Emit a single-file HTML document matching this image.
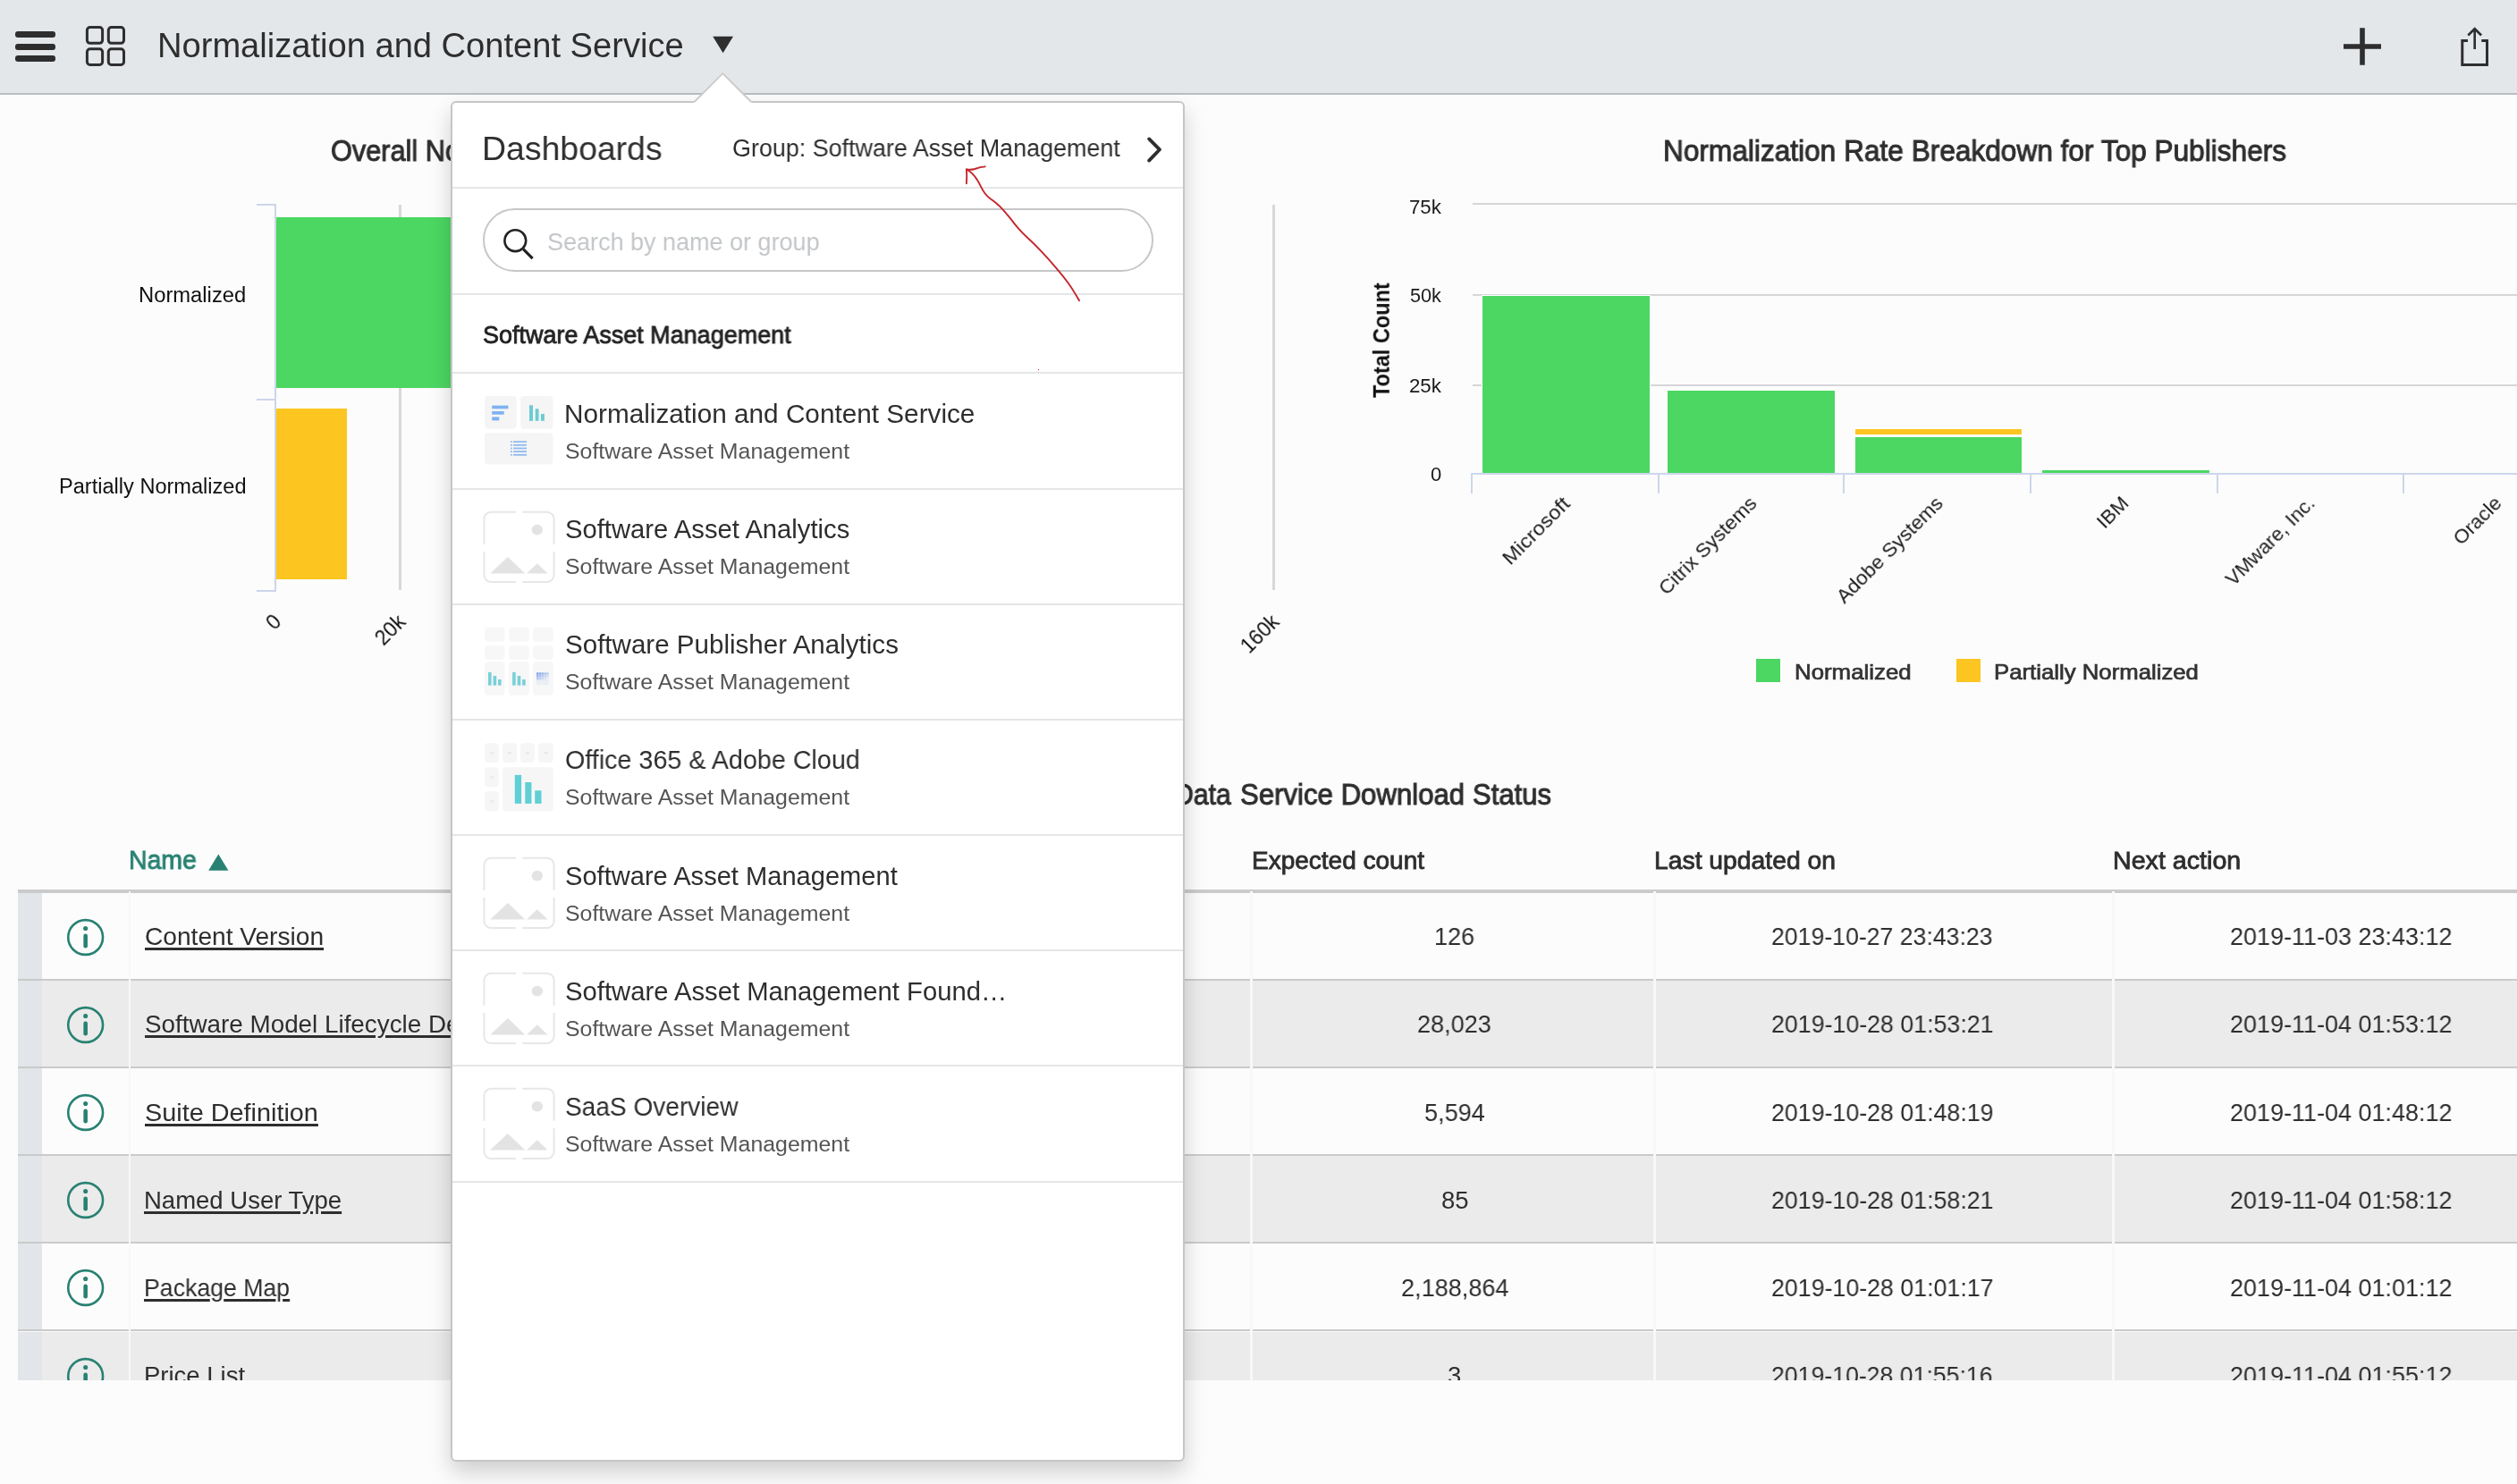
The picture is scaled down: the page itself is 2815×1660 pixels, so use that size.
<!DOCTYPE html>
<html lang="en"><head><meta charset="utf-8"><title>Normalization and Content Service</title>
<style>
html,body{margin:0;padding:0}
body{width:2815px;height:1660px;overflow:hidden;background:#fcfcfc;font-family:"Liberation Sans",sans-serif;position:relative}
.t{position:absolute;white-space:nowrap;display:block;will-change:transform}
.a{position:absolute;display:block}
#page{position:absolute;left:0;top:0;width:2815px;height:1544px;overflow:hidden}
</style></head><body>
<div id="page">
<i class="a" style="left:0.00px;top:0.00px;width:2815.00px;height:104.00px;background:#e4e7ea;"></i>
<i class="a" style="left:0.00px;top:104.00px;width:2815.00px;height:2.00px;background:#b9bdc1;"></i>
<i class="a" style="left:16.80px;top:35.00px;width:45.20px;height:7.00px;background:#2e2e2e;border-radius:3px;"></i>
<i class="a" style="left:16.80px;top:49.00px;width:45.20px;height:7.00px;background:#2e2e2e;border-radius:3px;"></i>
<i class="a" style="left:16.80px;top:62.00px;width:45.20px;height:7.00px;background:#2e2e2e;border-radius:3px;"></i>
<svg class="a" style="left:0px;top:0px" width="160" height="104" viewBox="0 0 160 104"><rect x="97.4" y="30.6" width="17.2" height="17.7" rx="3.2" fill="none" stroke="#2e2e2e" stroke-width="3"/><rect x="97.4" y="54.8" width="17.2" height="17.7" rx="3.2" fill="none" stroke="#2e2e2e" stroke-width="3"/><rect x="121.3" y="30.6" width="17.2" height="17.7" rx="3.2" fill="none" stroke="#2e2e2e" stroke-width="3"/><rect x="121.3" y="54.8" width="17.2" height="17.7" rx="3.2" fill="none" stroke="#2e2e2e" stroke-width="3"/></svg>
<svg class="a" style="left:790px;top:30px" width="40" height="40" viewBox="0 0 40 40"><path d="M7.2 10.8 L30 10.8 L18.6 29.2 Z" fill="#2e2e2e"/></svg>
<svg class="a" style="left:2600px;top:20px" width="200" height="70" viewBox="0 0 200 70"><path d="M21 32 H63 M42 11.3 V52.8" stroke="#2e2e2e" stroke-width="5.6" fill="none"/><path d="M160 25.5 H153.8 V52.4 H181.5 V25.5 H175.3" stroke="#2e2e2e" stroke-width="3" fill="none"/><path d="M167.7 35 V12.5 M160.3 19.5 L167.7 12.2 L175.1 19.5" stroke="#2e2e2e" stroke-width="2.6" fill="none"/></svg>
<i class="a" style="left:446.00px;top:229.00px;width:2.50px;height:431.00px;background:#d8d8d8;"></i>
<i class="a" style="left:1423.30px;top:229.00px;width:2.50px;height:431.00px;background:#d8d8d8;"></i>
<i class="a" style="left:306.50px;top:228.00px;width:2.50px;height:434.00px;background:#ccd6eb;"></i>
<i class="a" style="left:286.70px;top:227.60px;width:22.30px;height:2.00px;background:#ccd6eb;"></i>
<i class="a" style="left:286.70px;top:446.00px;width:22.30px;height:2.00px;background:#ccd6eb;"></i>
<i class="a" style="left:286.70px;top:660.00px;width:22.30px;height:2.00px;background:#ccd6eb;"></i>
<i class="a" style="left:309.00px;top:243.00px;width:991.00px;height:191.00px;background:#4bd762;"></i>
<i class="a" style="left:309.00px;top:457.00px;width:78.80px;height:191.00px;background:#fcc520;"></i>
<i class="a" style="left:1647.00px;top:227.40px;width:1168.00px;height:2.00px;background:#d6d6d9;"></i>
<i class="a" style="left:1647.00px;top:328.70px;width:1168.00px;height:2.00px;background:#d6d6d9;"></i>
<i class="a" style="left:1647.00px;top:430.20px;width:1168.00px;height:2.00px;background:#d6d6d9;"></i>
<i class="a" style="left:1657.00px;top:329.80px;width:188.70px;height:200.40px;background:#fff;"></i>
<i class="a" style="left:1658.00px;top:330.80px;width:186.70px;height:198.40px;background:#4bd762;"></i>
<i class="a" style="left:1864.20px;top:435.60px;width:188.80px;height:94.60px;background:#fff;"></i>
<i class="a" style="left:1865.20px;top:436.60px;width:186.80px;height:92.60px;background:#4bd762;"></i>
<i class="a" style="left:2073.80px;top:487.90px;width:188.70px;height:42.30px;background:#fff;"></i>
<i class="a" style="left:2074.80px;top:488.90px;width:186.70px;height:40.30px;background:#4bd762;"></i>
<i class="a" style="left:2073.80px;top:478.60px;width:188.70px;height:8.80px;background:#fff;"></i>
<i class="a" style="left:2074.80px;top:479.60px;width:186.70px;height:6.80px;background:#fcc522;"></i>
<i class="a" style="left:2283.00px;top:525.20px;width:188.70px;height:5.00px;background:#fff;"></i>
<i class="a" style="left:2284.00px;top:526.20px;width:186.70px;height:3.00px;background:#4bd762;"></i>
<i class="a" style="left:1645.00px;top:529.00px;width:1170.00px;height:2.00px;background:#ccd6eb;"></i>
<i class="a" style="left:1645.00px;top:529.00px;width:2.00px;height:22.50px;background:#ccd6eb;"></i>
<i class="a" style="left:1854.20px;top:529.00px;width:2.00px;height:22.50px;background:#ccd6eb;"></i>
<i class="a" style="left:2061.00px;top:529.00px;width:2.00px;height:22.50px;background:#ccd6eb;"></i>
<i class="a" style="left:2270.00px;top:529.00px;width:2.00px;height:22.50px;background:#ccd6eb;"></i>
<i class="a" style="left:2479.00px;top:529.00px;width:2.00px;height:22.50px;background:#ccd6eb;"></i>
<i class="a" style="left:2687.20px;top:529.00px;width:2.00px;height:22.50px;background:#ccd6eb;"></i>
<i class="a" style="left:1964.00px;top:736.80px;width:27.00px;height:26.40px;background:#4bd762;"></i>
<i class="a" style="left:2187.50px;top:736.80px;width:27.00px;height:26.40px;background:#fcc522;"></i>
<svg class="a" style="left:228px;top:950px" width="32" height="28" viewBox="0 0 32 28"><path d="M5.2 23.8 L27.4 23.8 L16.3 5.6 Z" fill="#288172"/></svg>
<i class="a" style="left:20.00px;top:995.00px;width:2795.00px;height:4.00px;background:#cbcbcb;"></i>
<i class="a" style="left:20.00px;top:999.00px;width:26.70px;height:96.00px;background:#e2e5e9;"></i>
<i class="a" style="left:20.00px;top:1095.00px;width:2795.00px;height:2.00px;background:#cacaca;"></i>
<i class="a" style="left:143.90px;top:997.00px;width:2.40px;height:100.00px;background:#f8f8f8;"></i>
<i class="a" style="left:1398.40px;top:997.00px;width:2.40px;height:100.00px;background:#f8f8f8;"></i>
<i class="a" style="left:1849.20px;top:997.00px;width:2.40px;height:100.00px;background:#f8f8f8;"></i>
<i class="a" style="left:2362.30px;top:997.00px;width:2.40px;height:100.00px;background:#f8f8f8;"></i>
<svg class="a" style="left:70px;top:1023px" width="52" height="52" viewBox="0 0 52 52"><circle cx="25.65" cy="25.5" r="19.4" fill="none" stroke="#288172" stroke-width="2.6"/><circle cx="25.65" cy="15.5" r="2.55" fill="#288172"/><path d="M25.65 23.8 V35.3" stroke="#288172" stroke-width="4.6" stroke-linecap="round"/></svg>
<i class="a" style="left:20.00px;top:1097.00px;width:2795.00px;height:96.00px;background:#ebebeb;"></i>
<i class="a" style="left:20.00px;top:1097.00px;width:26.70px;height:96.00px;background:#e2e5e9;"></i>
<i class="a" style="left:20.00px;top:1193.00px;width:2795.00px;height:2.00px;background:#cacaca;"></i>
<i class="a" style="left:143.90px;top:1097.00px;width:2.40px;height:98.00px;background:#f8f8f8;"></i>
<i class="a" style="left:1398.40px;top:1097.00px;width:2.40px;height:98.00px;background:#f8f8f8;"></i>
<i class="a" style="left:1849.20px;top:1097.00px;width:2.40px;height:98.00px;background:#f8f8f8;"></i>
<i class="a" style="left:2362.30px;top:1097.00px;width:2.40px;height:98.00px;background:#f8f8f8;"></i>
<svg class="a" style="left:70px;top:1121px" width="52" height="52" viewBox="0 0 52 52"><circle cx="25.65" cy="25.5" r="19.4" fill="none" stroke="#288172" stroke-width="2.6"/><circle cx="25.65" cy="15.5" r="2.55" fill="#288172"/><path d="M25.65 23.8 V35.3" stroke="#288172" stroke-width="4.6" stroke-linecap="round"/></svg>
<i class="a" style="left:20.00px;top:1195.00px;width:26.70px;height:96.00px;background:#e2e5e9;"></i>
<i class="a" style="left:20.00px;top:1291.00px;width:2795.00px;height:2.00px;background:#cacaca;"></i>
<i class="a" style="left:143.90px;top:1195.00px;width:2.40px;height:98.00px;background:#f8f8f8;"></i>
<i class="a" style="left:1398.40px;top:1195.00px;width:2.40px;height:98.00px;background:#f8f8f8;"></i>
<i class="a" style="left:1849.20px;top:1195.00px;width:2.40px;height:98.00px;background:#f8f8f8;"></i>
<i class="a" style="left:2362.30px;top:1195.00px;width:2.40px;height:98.00px;background:#f8f8f8;"></i>
<svg class="a" style="left:70px;top:1219px" width="52" height="52" viewBox="0 0 52 52"><circle cx="25.65" cy="25.5" r="19.4" fill="none" stroke="#288172" stroke-width="2.6"/><circle cx="25.65" cy="15.5" r="2.55" fill="#288172"/><path d="M25.65 23.8 V35.3" stroke="#288172" stroke-width="4.6" stroke-linecap="round"/></svg>
<i class="a" style="left:20.00px;top:1293.00px;width:2795.00px;height:96.00px;background:#ebebeb;"></i>
<i class="a" style="left:20.00px;top:1293.00px;width:26.70px;height:96.00px;background:#e2e5e9;"></i>
<i class="a" style="left:20.00px;top:1389.00px;width:2795.00px;height:2.00px;background:#cacaca;"></i>
<i class="a" style="left:143.90px;top:1293.00px;width:2.40px;height:98.00px;background:#f8f8f8;"></i>
<i class="a" style="left:1398.40px;top:1293.00px;width:2.40px;height:98.00px;background:#f8f8f8;"></i>
<i class="a" style="left:1849.20px;top:1293.00px;width:2.40px;height:98.00px;background:#f8f8f8;"></i>
<i class="a" style="left:2362.30px;top:1293.00px;width:2.40px;height:98.00px;background:#f8f8f8;"></i>
<svg class="a" style="left:70px;top:1317px" width="52" height="52" viewBox="0 0 52 52"><circle cx="25.65" cy="25.5" r="19.4" fill="none" stroke="#288172" stroke-width="2.6"/><circle cx="25.65" cy="15.5" r="2.55" fill="#288172"/><path d="M25.65 23.8 V35.3" stroke="#288172" stroke-width="4.6" stroke-linecap="round"/></svg>
<i class="a" style="left:20.00px;top:1391.00px;width:26.70px;height:96.00px;background:#e2e5e9;"></i>
<i class="a" style="left:20.00px;top:1487.00px;width:2795.00px;height:2.00px;background:#cacaca;"></i>
<i class="a" style="left:143.90px;top:1391.00px;width:2.40px;height:98.00px;background:#f8f8f8;"></i>
<i class="a" style="left:1398.40px;top:1391.00px;width:2.40px;height:98.00px;background:#f8f8f8;"></i>
<i class="a" style="left:1849.20px;top:1391.00px;width:2.40px;height:98.00px;background:#f8f8f8;"></i>
<i class="a" style="left:2362.30px;top:1391.00px;width:2.40px;height:98.00px;background:#f8f8f8;"></i>
<svg class="a" style="left:70px;top:1415px" width="52" height="52" viewBox="0 0 52 52"><circle cx="25.65" cy="25.5" r="19.4" fill="none" stroke="#288172" stroke-width="2.6"/><circle cx="25.65" cy="15.5" r="2.55" fill="#288172"/><path d="M25.65 23.8 V35.3" stroke="#288172" stroke-width="4.6" stroke-linecap="round"/></svg>
<i class="a" style="left:20.00px;top:1490.00px;width:2795.00px;height:96.00px;background:#ebebeb;"></i>
<i class="a" style="left:20.00px;top:1490.00px;width:26.70px;height:96.00px;background:#e2e5e9;"></i>
<i class="a" style="left:20.00px;top:1586.00px;width:2795.00px;height:2.00px;background:#cacaca;"></i>
<i class="a" style="left:143.90px;top:1490.00px;width:2.40px;height:98.00px;background:#f8f8f8;"></i>
<i class="a" style="left:1398.40px;top:1490.00px;width:2.40px;height:98.00px;background:#f8f8f8;"></i>
<i class="a" style="left:1849.20px;top:1490.00px;width:2.40px;height:98.00px;background:#f8f8f8;"></i>
<i class="a" style="left:2362.30px;top:1490.00px;width:2.40px;height:98.00px;background:#f8f8f8;"></i>
<svg class="a" style="left:70px;top:1514px" width="52" height="52" viewBox="0 0 52 52"><circle cx="25.65" cy="25.5" r="19.4" fill="none" stroke="#288172" stroke-width="2.6"/><circle cx="25.65" cy="15.5" r="2.55" fill="#288172"/><path d="M25.65 23.8 V35.3" stroke="#288172" stroke-width="4.6" stroke-linecap="round"/></svg>
<span class="t" style="font-size:38px;line-height:38px;color:#2e2e2e;top:32px;left:175.59px;transform-origin:0 32px;transform:scaleX(1.0025);">Normalization and Content Service</span>
<span class="t" style="font-size:32.5px;line-height:32.5px;color:#2e2e2e;-webkit-text-stroke:0.97px;top:153px;left:369.86px;transform-origin:0 27px;transform:scaleX(0.9441);">Overall Normalization Rate</span>
<span class="t" style="font-size:23.5px;line-height:23.5px;color:#111;top:319px;left:155.19px;transform-origin:0 19px;transform:scaleX(1.0114);">Normalized</span>
<span class="t" style="font-size:23.5px;line-height:23.5px;color:#111;top:533px;left:65.80px;transform-origin:0 19px;transform:scaleX(1.0030);">Partially Normalized</span>
<span class="t" style="font-size:23.5px;line-height:23.5px;color:#111;top:677.80px;left:302.69px;transform-origin:13.01px 19px;transform:rotate(-45deg) scaleX(0.9700);">0</span>
<span class="t" style="font-size:23.5px;line-height:23.5px;color:#111;top:677.80px;left:416.56px;transform-origin:38.14px 19px;transform:rotate(-45deg) scaleX(0.9700);">20k</span>
<span class="t" style="font-size:23.5px;line-height:23.5px;color:#111;top:677.80px;left:1380.98px;transform-origin:51.22px 19px;transform:rotate(-45deg) scaleX(0.9700);">160k</span>
<span class="t" style="font-size:32.5px;line-height:32.5px;color:#2e2e2e;-webkit-text-stroke:0.97px;top:153px;left:1859.85px;transform-origin:0 27px;transform:scaleX(0.9728);">Normalization Rate Breakdown for Top Publishers</span>
<span class="t" style="font-size:21.5px;line-height:21.5px;color:#1a1a1a;top:222px;left:1576.37px;transform-origin:0 17px;transform:scaleX(1.0347);">75k</span>
<span class="t" style="font-size:21.5px;line-height:21.5px;color:#1a1a1a;top:321px;left:1577.40px;transform-origin:0 17px;transform:scaleX(1.0051);">50k</span>
<span class="t" style="font-size:21.5px;line-height:21.5px;color:#1a1a1a;top:422px;left:1576.37px;transform-origin:0 17px;transform:scaleX(1.0347);">25k</span>
<span class="t" style="font-size:21.5px;line-height:21.5px;color:#1a1a1a;top:521px;left:1600.25px;transform-origin:0 17px;transform:scaleX(1.0200);">0</span>
<span class="t" style="font-size:26.2px;line-height:26.2px;color:#111;font-weight:700;top:293.60px;left:1410.01px;transform-origin:143.79px 22px;transform:rotate(-90deg) scaleX(0.8971);">Total Count</span>
<span class="t" style="font-size:21.5px;line-height:21.5px;color:#1a1a1a;top:548.00px;left:1669.75px;transform-origin:87.25px 17px;transform:rotate(-45deg) scaleX(1.1038);">Microsoft</span>
<span class="t" style="font-size:21.5px;line-height:21.5px;color:#1a1a1a;top:548.00px;left:1828.58px;transform-origin:136.62px 17px;transform:rotate(-45deg) scaleX(1.0529);">Citrix Systems</span>
<span class="t" style="font-size:21.5px;line-height:21.5px;color:#1a1a1a;top:548.00px;left:2023.57px;transform-origin:149.83px 17px;transform:rotate(-45deg) scaleX(1.0479);">Adobe Systems</span>
<span class="t" style="font-size:21.5px;line-height:21.5px;color:#1a1a1a;top:548.00px;left:2344.28px;transform-origin:37.32px 17px;transform:rotate(-45deg) scaleX(1.0400);">IBM</span>
<span class="t" style="font-size:21.5px;line-height:21.5px;color:#1a1a1a;top:548.00px;left:2465.32px;transform-origin:124.48px 17px;transform:rotate(-45deg) scaleX(1.0400);">VMware, Inc.</span>
<span class="t" style="font-size:21.5px;line-height:21.5px;color:#1a1a1a;top:548.00px;left:2735.63px;transform-origin:62.37px 17px;transform:rotate(-45deg) scaleX(1.0400);">Oracle</span>
<span class="t" style="font-size:24px;line-height:24px;color:#333;-webkit-text-stroke:0.72px;top:740px;left:2007.42px;transform-origin:0 20px;transform:scaleX(1.0762);">Normalized</span>
<span class="t" style="font-size:24px;line-height:24px;color:#333;-webkit-text-stroke:0.72px;top:740px;left:2230.33px;transform-origin:0 20px;transform:scaleX(1.0727);">Partially Normalized</span>
<span class="t" style="font-size:32.5px;line-height:32.5px;color:#2e2e2e;-webkit-text-stroke:0.97px;top:873px;left:1386.84px;transform-origin:0 27px;transform:scaleX(0.9587);">Service Download Status</span>
<span class="t" style="font-size:32.5px;line-height:32.5px;color:#2e2e2e;-webkit-text-stroke:0.97px;top:873px;left:1312.59px;transform-origin:0 27px;transform:scaleX(0.9300);">Data</span>
<span class="t" style="font-size:29px;line-height:29px;color:#288172;-webkit-text-stroke:0.87px;top:948px;left:144.44px;transform-origin:0 24px;transform:scaleX(0.9807);">Name</span>
<span class="t" style="font-size:28px;line-height:28px;color:#2e2e2e;-webkit-text-stroke:0.84px;top:949px;left:1400.20px;transform-origin:0 23px;transform:scaleX(0.9982);">Expected count</span>
<span class="t" style="font-size:28px;line-height:28px;color:#2e2e2e;-webkit-text-stroke:0.84px;top:949px;left:1850.48px;transform-origin:0 23px;transform:scaleX(1.0108);">Last updated on</span>
<span class="t" style="font-size:28px;line-height:28px;color:#2e2e2e;-webkit-text-stroke:0.84px;top:949px;left:2363.05px;transform-origin:0 23px;transform:scaleX(1.0227);">Next action</span>
<span class="t" style="font-size:27.5px;line-height:27.5px;color:#2e2e2e;top:1034px;left:161.68px;transform-origin:0 23px;transform:scaleX(1.0223);text-decoration:underline;text-decoration-thickness:2.6px;text-underline-offset:2.9px;">Content Version</span>
<span class="t" style="font-size:27.5px;line-height:27.5px;color:#2e2e2e;top:1034px;left:1603.76px;transform-origin:0 23px;transform:scaleX(0.9850);">126</span>
<span class="t" style="font-size:27.5px;line-height:27.5px;color:#2e2e2e;top:1034px;left:1980.83px;transform-origin:0 23px;transform:scaleX(0.9694);">2019-10-27 23:43:23</span>
<span class="t" style="font-size:27.5px;line-height:27.5px;color:#2e2e2e;top:1034px;left:2493.92px;transform-origin:0 23px;transform:scaleX(0.9811);">2019-11-03 23:43:12</span>
<span class="t" style="font-size:27.5px;line-height:27.5px;color:#2e2e2e;top:1132px;left:161.69px;transform-origin:0 23px;transform:scaleX(1.0115);text-decoration:underline;text-decoration-thickness:2.6px;text-underline-offset:2.9px;">Software Model Lifecycle Definition</span>
<span class="t" style="font-size:27.5px;line-height:27.5px;color:#2e2e2e;top:1132px;left:1585.42px;transform-origin:0 23px;transform:scaleX(0.9850);">28,023</span>
<span class="t" style="font-size:27.5px;line-height:27.5px;color:#2e2e2e;top:1132px;left:1980.83px;transform-origin:0 23px;transform:scaleX(0.9733);">2019-10-28 01:53:21</span>
<span class="t" style="font-size:27.5px;line-height:27.5px;color:#2e2e2e;top:1132px;left:2493.92px;transform-origin:0 23px;transform:scaleX(0.9811);">2019-11-04 01:53:12</span>
<span class="t" style="font-size:27.5px;line-height:27.5px;color:#2e2e2e;top:1231px;left:161.65px;transform-origin:0 23px;transform:scaleX(1.0483);text-decoration:underline;text-decoration-thickness:2.6px;text-underline-offset:2.9px;">Suite Definition</span>
<span class="t" style="font-size:27.5px;line-height:27.5px;color:#2e2e2e;top:1231px;left:1592.95px;transform-origin:0 23px;transform:scaleX(0.9850);">5,594</span>
<span class="t" style="font-size:27.5px;line-height:27.5px;color:#2e2e2e;top:1231px;left:1980.83px;transform-origin:0 23px;transform:scaleX(0.9733);">2019-10-28 01:48:19</span>
<span class="t" style="font-size:27.5px;line-height:27.5px;color:#2e2e2e;top:1231px;left:2493.92px;transform-origin:0 23px;transform:scaleX(0.9811);">2019-11-04 01:48:12</span>
<span class="t" style="font-size:27.5px;line-height:27.5px;color:#2e2e2e;top:1329px;left:160.70px;transform-origin:0 23px;transform:scaleX(0.9989);text-decoration:underline;text-decoration-thickness:2.6px;text-underline-offset:2.9px;">Named User Type</span>
<span class="t" style="font-size:27.5px;line-height:27.5px;color:#2e2e2e;top:1329px;left:1611.78px;transform-origin:0 23px;transform:scaleX(0.9850);">85</span>
<span class="t" style="font-size:27.5px;line-height:27.5px;color:#2e2e2e;top:1329px;left:1980.83px;transform-origin:0 23px;transform:scaleX(0.9733);">2019-10-28 01:58:21</span>
<span class="t" style="font-size:27.5px;line-height:27.5px;color:#2e2e2e;top:1329px;left:2493.92px;transform-origin:0 23px;transform:scaleX(0.9811);">2019-11-04 01:58:12</span>
<span class="t" style="font-size:27.5px;line-height:27.5px;color:#2e2e2e;top:1427px;left:160.76px;transform-origin:0 23px;transform:scaleX(0.9695);text-decoration:underline;text-decoration-thickness:2.6px;text-underline-offset:2.9px;">Package Map</span>
<span class="t" style="font-size:27.5px;line-height:27.5px;color:#2e2e2e;top:1427px;left:1566.60px;transform-origin:0 23px;transform:scaleX(0.9850);">2,188,864</span>
<span class="t" style="font-size:27.5px;line-height:27.5px;color:#2e2e2e;top:1427px;left:1980.83px;transform-origin:0 23px;transform:scaleX(0.9733);">2019-10-28 01:01:17</span>
<span class="t" style="font-size:27.5px;line-height:27.5px;color:#2e2e2e;top:1427px;left:2493.92px;transform-origin:0 23px;transform:scaleX(0.9811);">2019-11-04 01:01:12</span>
<span class="t" style="font-size:27.5px;line-height:27.5px;color:#2e2e2e;top:1525px;left:160.71px;transform-origin:0 23px;transform:scaleX(0.9959);text-decoration:underline;text-decoration-thickness:2.6px;text-underline-offset:2.9px;">Price List</span>
<span class="t" style="font-size:27.5px;line-height:27.5px;color:#2e2e2e;top:1525px;left:1619.32px;transform-origin:0 23px;transform:scaleX(0.9850);">3</span>
<span class="t" style="font-size:27.5px;line-height:27.5px;color:#2e2e2e;top:1525px;left:1980.83px;transform-origin:0 23px;transform:scaleX(0.9694);">2019-10-28 01:55:16</span>
<span class="t" style="font-size:27.5px;line-height:27.5px;color:#2e2e2e;top:1525px;left:2493.92px;transform-origin:0 23px;transform:scaleX(0.9811);">2019-11-04 01:55:12</span>
</div>
<div class="a" style="left:504px;top:112.6px;width:817px;height:1518.4px;background:#fff;border:2px solid #c6c6c6;border-radius:6px;box-shadow:0 12px 25px rgba(0,0,0,0.18)"></div>
<svg class="a" style="left:770px;top:78px" width="80" height="40" viewBox="0 0 80 40"><path d="M6.5 36.3 L38.3 4.2 L70.2 36.3 L70.2 39 L6.5 39 Z" fill="#fff"/><path d="M6.5 36.0 L38.3 4.2 L70.2 36.0" fill="none" stroke="#c9c9c9" stroke-width="1.8"/></svg>
<svg class="a" style="left:1270px;top:145px" width="40" height="45" viewBox="0 0 40 45"><path d="M15.1 10.4 L27.0 22.3 L15.1 34.6" fill="none" stroke="#2e2e2e" stroke-width="3.8" stroke-linecap="round" stroke-linejoin="round"/></svg>
<i class="a" style="left:506.00px;top:209.00px;width:817.00px;height:2.00px;background:#e4e6e8;"></i>
<i class="a" style="left:540px;top:232.7px;width:745.5px;height:67.7px;border:2px solid #c6c7c9;border-radius:36px;background:#fff"></i>
<svg class="a" style="left:555px;top:250px" width="50" height="50" viewBox="0 0 50 50"><circle cx="21.3" cy="19.2" r="11.9" fill="none" stroke="#222" stroke-width="2.6"/><path d="M30.2 28.7 L40.6 39.2" stroke="#222" stroke-width="3.2" fill="none"/></svg>
<i class="a" style="left:506.00px;top:328.00px;width:817.00px;height:2.00px;background:#e4e6e8;"></i>
<svg class="a" style="left:1060px;top:170px" width="170" height="180" viewBox="0 0 170 180"><path d="M147.0 166.2 Q139.5 153.1 134.1 145.7 Q128.6 138.3 121.3 129.8 Q114.0 121.3 105.5 112.2 Q97.0 103.1 90.3 97.0 Q83.7 91.0 79.5 86.2 Q75.2 81.3 71.6 76.4 Q67.9 71.6 63.1 66.1 Q58.2 60.6 54.5 57.6 Q50.9 54.6 47.6 52.3 Q44.3 50.0 41.5 46.2 Q38.8 42.5 36.7 38.2 Q34.6 34.0 32.5 30.6 Q30.3 27.3 27.3 24.2 Q24.3 21.2 22.6 20.3 L20.9 19.4" fill="none" stroke="#c4262c" stroke-width="1.9" stroke-linecap="round" stroke-linejoin="round"/><path d="M41.8 16.4 Q36.4 16.6 30.3 19.0 Q25 20.4 20.9 19.4 Q21.6 26 20.9 35.2" fill="none" stroke="#c4262c" stroke-width="1.9" stroke-linecap="round" stroke-linejoin="round"/></svg>
<i class="a" style="left:1160.50px;top:412.50px;width:1.50px;height:1.50px;background:#c4262c;"></i>
<i class="a" style="left:506.00px;top:416.45px;width:817.00px;height:2.00px;background:#e4e6e8;"></i>
<svg class="a" style="left:540px;top:417.0px" width="82" height="129" viewBox="0 0 82 129"><rect x="2.1" y="26.1" width="35.6" height="36.6" rx="4" fill="#f5f5f5"/><rect x="42.2" y="26.1" width="36.3" height="36.6" rx="4" fill="#f5f5f5"/><rect x="2.1" y="67.3" width="76.4" height="35.3" rx="4" fill="#f5f5f5"/><rect x="10.2" y="36.6" width="18.2" height="3.7" fill="#7fb2f0"/><rect x="10.2" y="43.0" width="13.5" height="3.7" fill="#7fb2f0"/><rect x="10.2" y="49.4" width="8.1" height="4.0" fill="#7fb2f0"/><rect x="52.0" y="36.3" width="4.0" height="17.5" fill="#6bccd2"/><rect x="58.7" y="40.3" width="3.8" height="13.5" fill="#6bccd2"/><rect x="65.0" y="46.0" width="3.9" height="7.8" fill="#6bccd2"/><rect x="34.1" y="76.30" width="14.9" height="1.8" fill="#8fbaee"/><rect x="31" y="76.30" width="1.8" height="1.8" fill="#8fbaee"/><rect x="34.1" y="79.95" width="14.9" height="1.8" fill="#8fbaee"/><rect x="31" y="79.95" width="1.8" height="1.8" fill="#8fbaee"/><rect x="34.1" y="83.60" width="14.9" height="1.8" fill="#8fbaee"/><rect x="31" y="83.60" width="1.8" height="1.8" fill="#8fbaee"/><rect x="34.1" y="87.25" width="14.9" height="1.8" fill="#8fbaee"/><rect x="31" y="87.25" width="1.8" height="1.8" fill="#8fbaee"/><rect x="34.1" y="90.90" width="14.9" height="1.8" fill="#8fbaee"/><rect x="31" y="90.90" width="1.8" height="1.8" fill="#8fbaee"/></svg>
<i class="a" style="left:506.00px;top:545.60px;width:817.00px;height:2.00px;background:#e4e6e8;"></i>
<svg class="a" style="left:540px;top:546.5px" width="82" height="129" viewBox="0 0 82 129"><path d="M36.8 25.7 H9.4 a8 8 0 0 0 -8 8 V61.8 M1.4 70 V96.1 a8 8 0 0 0 8 8 H36.8 M44.3 104.1 H71.6 a8 8 0 0 0 8 -8 V70 M79.6 61.8 V33.7 a8 8 0 0 0 -8 -8 H44.3" fill="none" stroke="#e7e7e7" stroke-width="2"/><ellipse cx="60.8" cy="45.6" rx="6.2" ry="5.8" fill="#e3e3e3"/><path d="M8.2 94.5 L27.9 75.9 L47.3 94.5 Z M49 94.5 L60.8 83.2 L72.6 94.5 Z" fill="#e3e3e3"/></svg>
<i class="a" style="left:506.00px;top:674.75px;width:817.00px;height:2.00px;background:#e4e6e8;"></i>
<svg class="a" style="left:540px;top:676.0px" width="82" height="129" viewBox="0 0 82 129"><rect x="2.1" y="25.8" width="22.4" height="16" rx="4" fill="#f7f7f7"/><rect x="2.1" y="46" width="22.4" height="15.7" rx="4" fill="#f7f7f7"/><rect x="2.1" y="64.2" width="22.4" height="37.8" rx="4" fill="#f7f7f7"/><rect x="29.1" y="25.8" width="22.7" height="16" rx="4" fill="#f7f7f7"/><rect x="29.1" y="46" width="22.7" height="15.7" rx="4" fill="#f7f7f7"/><rect x="29.1" y="64.2" width="22.7" height="37.8" rx="4" fill="#f7f7f7"/><rect x="56.2" y="25.8" width="22.6" height="16" rx="4" fill="#f7f7f7"/><rect x="56.2" y="46" width="22.6" height="15.7" rx="4" fill="#f7f7f7"/><rect x="56.2" y="64.2" width="22.6" height="37.8" rx="4" fill="#f7f7f7"/><rect x="6.0" y="76.0" width="3.6" height="14.7" fill="#79d0d8"/><rect x="11.6" y="80.0" width="3.6" height="10.7" fill="#79d0d8"/><rect x="17.0" y="84.0" width="3.6" height="6.7" fill="#79d0d8"/><rect x="33.1" y="76.0" width="3.6" height="14.7" fill="#79d0d8"/><rect x="38.7" y="80.0" width="3.6" height="10.7" fill="#79d0d8"/><rect x="44.1" y="84.0" width="3.6" height="6.7" fill="#79d0d8"/><rect x="60.0" y="76.3" width="2.5" height="2.5" fill="#7fa4e8" fill-opacity="1.00"/><rect x="62.8" y="76.3" width="2.5" height="2.5" fill="#7fa4e8" fill-opacity="0.88"/><rect x="65.6" y="76.3" width="2.5" height="2.5" fill="#7fa4e8" fill-opacity="0.76"/><rect x="68.4" y="76.3" width="2.5" height="2.5" fill="#7fa4e8" fill-opacity="0.64"/><rect x="71.2" y="76.3" width="2.5" height="2.5" fill="#7fa4e8" fill-opacity="0.52"/><rect x="60.0" y="79.1" width="2.5" height="2.5" fill="#7fa4e8" fill-opacity="0.80"/><rect x="62.8" y="79.1" width="2.5" height="2.5" fill="#7fa4e8" fill-opacity="0.68"/><rect x="65.6" y="79.1" width="2.5" height="2.5" fill="#7fa4e8" fill-opacity="0.56"/><rect x="68.4" y="79.1" width="2.5" height="2.5" fill="#7fa4e8" fill-opacity="0.44"/><rect x="71.2" y="79.1" width="2.5" height="2.5" fill="#7fa4e8" fill-opacity="0.32"/><rect x="60.0" y="81.9" width="2.5" height="2.5" fill="#7fa4e8" fill-opacity="0.60"/><rect x="62.8" y="81.9" width="2.5" height="2.5" fill="#7fa4e8" fill-opacity="0.48"/><rect x="65.6" y="81.9" width="2.5" height="2.5" fill="#7fa4e8" fill-opacity="0.36"/><rect x="68.4" y="81.9" width="2.5" height="2.5" fill="#7fa4e8" fill-opacity="0.24"/><rect x="71.2" y="81.9" width="2.5" height="2.5" fill="#7fa4e8" fill-opacity="0.12"/><rect x="60.0" y="84.7" width="2.5" height="2.5" fill="#7fa4e8" fill-opacity="0.15"/><rect x="62.8" y="84.7" width="2.5" height="2.5" fill="#7fa4e8" fill-opacity="0.12"/><rect x="65.6" y="84.7" width="2.5" height="2.5" fill="#7fa4e8" fill-opacity="0.12"/><rect x="68.4" y="84.7" width="2.5" height="2.5" fill="#7fa4e8" fill-opacity="0.12"/><rect x="71.2" y="84.7" width="2.5" height="2.5" fill="#7fa4e8" fill-opacity="0.12"/><rect x="60.0" y="87.5" width="2.5" height="2.5" fill="#7fa4e8" fill-opacity="0.12"/><rect x="62.8" y="87.5" width="2.5" height="2.5" fill="#7fa4e8" fill-opacity="0.12"/><rect x="65.6" y="87.5" width="2.5" height="2.5" fill="#7fa4e8" fill-opacity="0.12"/><rect x="68.4" y="87.5" width="2.5" height="2.5" fill="#7fa4e8" fill-opacity="0.12"/><rect x="71.2" y="87.5" width="2.5" height="2.5" fill="#7fa4e8" fill-opacity="0.12"/></svg>
<i class="a" style="left:506.00px;top:803.90px;width:817.00px;height:2.00px;background:#e4e6e8;"></i>
<svg class="a" style="left:540px;top:805.0px" width="82" height="129" viewBox="0 0 82 129"><rect x="2.1" y="26.2" width="15.7" height="21.9" rx="4" fill="#f6f6f6"/><rect x="8.2" y="36.3" width="3.6" height="2" fill="#dfe9ee"/><rect x="22.0" y="26.2" width="16.0" height="21.9" rx="4" fill="#f6f6f6"/><rect x="28.2" y="36.3" width="3.6" height="2" fill="#dfe9ee"/><rect x="41.9" y="26.2" width="16.0" height="21.9" rx="4" fill="#f6f6f6"/><rect x="48.1" y="36.3" width="3.6" height="2" fill="#dfe9ee"/><rect x="62.0" y="26.2" width="16.8" height="21.9" rx="4" fill="#f6f6f6"/><rect x="68.6" y="36.3" width="3.6" height="2" fill="#dfe9ee"/><rect x="2.1" y="53.2" width="15.7" height="22.4" rx="4" fill="#f6f6f6"/><rect x="8.1" y="63.4" width="3.6" height="2" fill="#dfe9ee"/><rect x="2.1" y="80.1" width="15.7" height="22.4" rx="4" fill="#f6f6f6"/><rect x="8.1" y="90.3" width="3.6" height="2" fill="#dfe9ee"/><rect x="22" y="53.2" width="56.8" height="49.5" rx="4" fill="#f6f6f6"/><rect x="35.8" y="61.9" width="7.3" height="32.0" fill="#60cfd6"/><rect x="47.3" y="70.0" width="7.1" height="23.9" fill="#60cfd6"/><rect x="58.2" y="79.3" width="7.3" height="14.6" fill="#60cfd6"/></svg>
<i class="a" style="left:506.00px;top:933.05px;width:817.00px;height:2.00px;background:#e4e6e8;"></i>
<svg class="a" style="left:540px;top:933.95px" width="82" height="129" viewBox="0 0 82 129"><path d="M36.8 25.7 H9.4 a8 8 0 0 0 -8 8 V61.8 M1.4 70 V96.1 a8 8 0 0 0 8 8 H36.8 M44.3 104.1 H71.6 a8 8 0 0 0 8 -8 V70 M79.6 61.8 V33.7 a8 8 0 0 0 -8 -8 H44.3" fill="none" stroke="#e7e7e7" stroke-width="2"/><ellipse cx="60.8" cy="45.6" rx="6.2" ry="5.8" fill="#e3e3e3"/><path d="M8.2 94.5 L27.9 75.9 L47.3 94.5 Z M49 94.5 L60.8 83.2 L72.6 94.5 Z" fill="#e3e3e3"/></svg>
<i class="a" style="left:506.00px;top:1062.20px;width:817.00px;height:2.00px;background:#e4e6e8;"></i>
<svg class="a" style="left:540px;top:1063.1px" width="82" height="129" viewBox="0 0 82 129"><path d="M36.8 25.7 H9.4 a8 8 0 0 0 -8 8 V61.8 M1.4 70 V96.1 a8 8 0 0 0 8 8 H36.8 M44.3 104.1 H71.6 a8 8 0 0 0 8 -8 V70 M79.6 61.8 V33.7 a8 8 0 0 0 -8 -8 H44.3" fill="none" stroke="#e7e7e7" stroke-width="2"/><ellipse cx="60.8" cy="45.6" rx="6.2" ry="5.8" fill="#e3e3e3"/><path d="M8.2 94.5 L27.9 75.9 L47.3 94.5 Z M49 94.5 L60.8 83.2 L72.6 94.5 Z" fill="#e3e3e3"/></svg>
<i class="a" style="left:506.00px;top:1191.35px;width:817.00px;height:2.00px;background:#e4e6e8;"></i>
<svg class="a" style="left:540px;top:1192.25px" width="82" height="129" viewBox="0 0 82 129"><path d="M36.8 25.7 H9.4 a8 8 0 0 0 -8 8 V61.8 M1.4 70 V96.1 a8 8 0 0 0 8 8 H36.8 M44.3 104.1 H71.6 a8 8 0 0 0 8 -8 V70 M79.6 61.8 V33.7 a8 8 0 0 0 -8 -8 H44.3" fill="none" stroke="#e7e7e7" stroke-width="2"/><ellipse cx="60.8" cy="45.6" rx="6.2" ry="5.8" fill="#e3e3e3"/><path d="M8.2 94.5 L27.9 75.9 L47.3 94.5 Z M49 94.5 L60.8 83.2 L72.6 94.5 Z" fill="#e3e3e3"/></svg>
<i class="a" style="left:506.00px;top:1320.50px;width:817.00px;height:2.00px;background:#e4e6e8;"></i>
<span class="t" style="font-size:37.5px;line-height:37.5px;color:#2e2e2e;top:148px;left:539.41px;transform-origin:0 31px;transform:scaleX(0.9971);">Dashboards</span>
<span class="t" style="font-size:27px;line-height:27px;color:#2e2e2e;top:153px;left:819.20px;transform-origin:0 22px;transform:scaleX(0.9965);">Group: Software Asset Management</span>
<span class="t" style="font-size:28px;line-height:28px;color:#c3c6c9;top:257px;left:611.84px;transform-origin:0 23px;transform:scaleX(0.9638);">Search by name or group</span>
<span class="t" style="font-size:27px;line-height:27px;color:#222;-webkit-text-stroke:0.81px;top:362px;left:539.90px;transform-origin:0 22px;transform:scaleX(0.9983);">Software Asset Management</span>
<span class="t" style="font-size:29px;line-height:29px;color:#2e2e2e;top:449px;left:631.25px;transform-origin:0 24px;transform:scaleX(1.0252);">Normalization and Content Service</span>
<span class="t" style="font-size:23.5px;line-height:23.5px;color:#555;top:494px;left:631.94px;transform-origin:0 19px;transform:scaleX(1.0586);">Software Asset Management</span>
<span class="t" style="font-size:29px;line-height:29px;color:#2e2e2e;top:578px;left:632.29px;transform-origin:0 24px;transform:scaleX(1.0075);">Software Asset Analytics</span>
<span class="t" style="font-size:23.5px;line-height:23.5px;color:#555;top:623px;left:631.94px;transform-origin:0 19px;transform:scaleX(1.0586);">Software Asset Management</span>
<span class="t" style="font-size:29px;line-height:29px;color:#2e2e2e;top:707px;left:632.28px;transform-origin:0 24px;transform:scaleX(1.0192);">Software Publisher Analytics</span>
<span class="t" style="font-size:23.5px;line-height:23.5px;color:#555;top:752px;left:631.94px;transform-origin:0 19px;transform:scaleX(1.0586);">Software Asset Management</span>
<span class="t" style="font-size:29px;line-height:29px;color:#2e2e2e;top:836px;left:632.31px;transform-origin:0 24px;transform:scaleX(0.9898);">Office 365 &amp; Adobe Cloud</span>
<span class="t" style="font-size:23.5px;line-height:23.5px;color:#555;top:881px;left:631.94px;transform-origin:0 19px;transform:scaleX(1.0586);">Software Asset Management</span>
<span class="t" style="font-size:29px;line-height:29px;color:#2e2e2e;top:966px;left:632.30px;transform-origin:0 24px;transform:scaleX(1.0027);">Software Asset Management</span>
<span class="t" style="font-size:23.5px;line-height:23.5px;color:#555;top:1011px;left:631.94px;transform-origin:0 19px;transform:scaleX(1.0586);">Software Asset Management</span>
<span class="t" style="font-size:29px;line-height:29px;color:#2e2e2e;top:1095px;left:632.29px;transform-origin:0 24px;transform:scaleX(1.0085);">Software Asset Management Found…</span>
<span class="t" style="font-size:23.5px;line-height:23.5px;color:#555;top:1140px;left:631.94px;transform-origin:0 19px;transform:scaleX(1.0586);">Software Asset Management</span>
<span class="t" style="font-size:29px;line-height:29px;color:#2e2e2e;top:1224px;left:632.33px;transform-origin:0 24px;transform:scaleX(0.9679);">SaaS Overview</span>
<span class="t" style="font-size:23.5px;line-height:23.5px;color:#555;top:1269px;left:631.94px;transform-origin:0 19px;transform:scaleX(1.0586);">Software Asset Management</span>
</body></html>
